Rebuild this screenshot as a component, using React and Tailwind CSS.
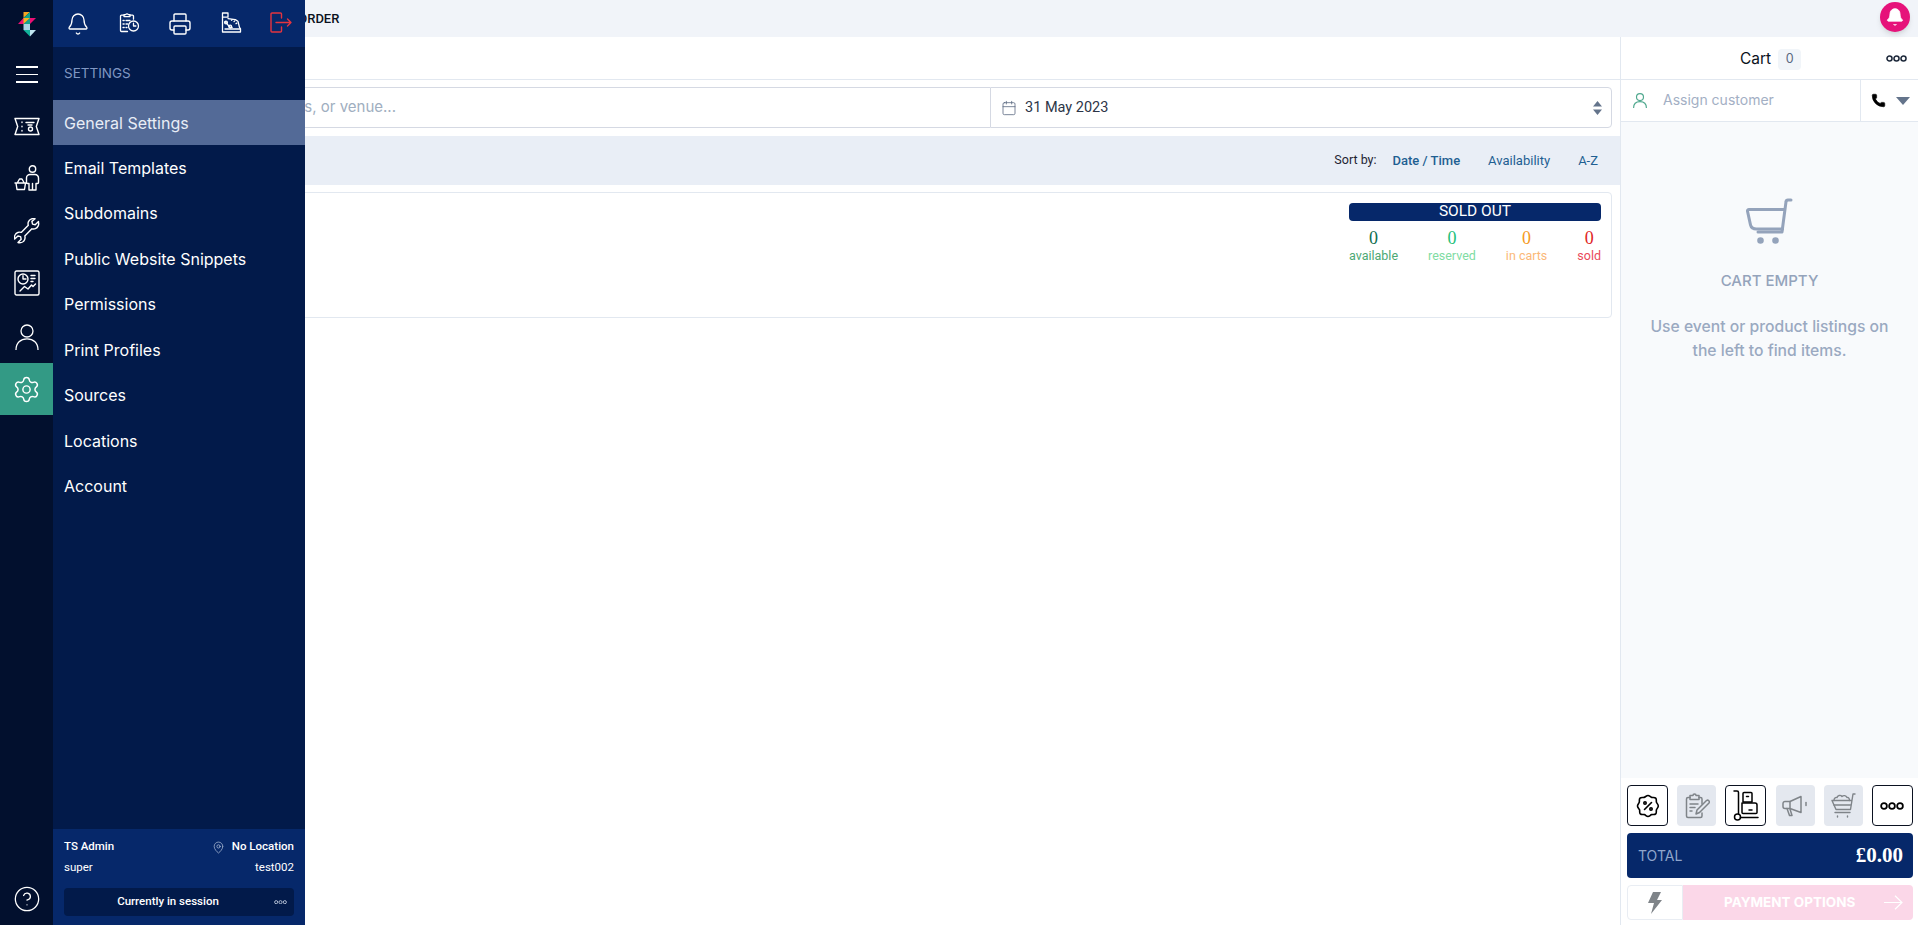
import { Bell, Printer, Settings, CircleHelp, Calendar, Phone, MapPin } from 'lucide-react';

const menu = ['General Settings', 'Email Templates', 'Subdomains', 'Public Website Snippets', 'Permissions', 'Print Profiles', 'Sources', 'Locations', 'Account'];

function Dots({ className = '', size = 20 }) {
  return (
    <svg width={size} height={size / 3} viewBox="0 0 30 10" fill="none" stroke="currentColor" strokeWidth="2.2" className={className}>
      <circle cx="5" cy="5" r="3.6" />
      <circle cx="15" cy="5" r="3.6" />
      <circle cx="25" cy="5" r="3.6" />
    </svg>
  );
}

function Logo() {
  return (
    <svg width="18" height="25" viewBox="0 0 18 25" className="block">
      <polygon points="5.5,0 12,0 5.5,6" fill="#f5a623" />
      <polygon points="12,0 12,6 5.5,6" fill="#12a58c" />
      <polygon points="0,12 5.5,6 18,6 12,12" fill="#ec0f74" />
      <polygon points="5.5,6 12,6 5.5,12" fill="#f5b81f" />
      <polygon points="12,6 12,12 5.5,12" fill="#12a58c" />
      <rect x="5.5" y="12" width="6.5" height="6" fill="#a9d3e6" />
      <polygon points="5.5,18 12,18 12,24.5" fill="#12b39a" />
      <polygon points="12,18 18,18 12,24.5" fill="#bfe6f2" />
    </svg>
  );
}

function ClipboardClock() {
  return (
    <svg width="21" height="21" viewBox="0 0 21 21" fill="none" stroke="currentColor" strokeWidth="1.3" strokeLinejoin="round" strokeLinecap="round">
      <path d="M8.5 19.5H2.5a1 1 0 0 1-1-1V4.2a1 1 0 0 1 1-1h2.3M11.2 3.2h2.3a1 1 0 0 1 1 1v3" />
      <path d="M5 4.6V2.6h1.8a1.3 1.3 0 0 1 2.4 0H11v2z" />
      <path d="M4 8.5h1.2M7 8.5h4M4 12h1.2M7 12h1.6M4 15.5h1.2M7 15.5h1" />
      <circle cx="14.5" cy="14" r="5" />
      <path d="M14.5 11.2V14h2.4" />
    </svg>
  );
}

function CashRegister() {
  return (
    <svg width="21" height="21" viewBox="0 0 21 21" fill="none" stroke="currentColor" strokeWidth="1.3" strokeLinejoin="round" strokeLinecap="round">
      <path d="M1.5 1h5.5v4.2H1.5z" />
      <path d="M1.5 5.2V20h18v-3.2l-1-1.4-1.6-6.2-2.6-1.6L7 6.6" />
      <path d="M4.2 9.5l4.3 5.3 2.6 0.6" />
      <circle cx="5" cy="10.5" r="1.4" />
      <circle cx="9.2" cy="14.6" r="1.4" />
      <path d="M10.5 8.2l.8-.6M13 9.6l.7-.7M15 11.6l.8-.5" />
      <path d="M4 17h15" />
    </svg>
  );
}

function LogoutIcon() {
  return (
    <svg width="22" height="21" viewBox="0 0 22 21" fill="none" stroke="#e5343f" strokeWidth="1.4" strokeLinecap="round" strokeLinejoin="round">
      <path d="M11.5 6V2a1 1 0 0 0-1-1H2a1 1 0 0 0-1 1v17a1 1 0 0 0 1 1h8.500a1 1 0 0 0 1-1v-4" />
      <path d="M6 10.500h15M17.500 7l3.500 3.500-3.500 3.500" />
    </svg>
  );
}

function TicketIcon() {
  return (
    <svg width="26" height="19" viewBox="0 0 26 19" fill="none" stroke="currentColor" strokeWidth="1.4" strokeLinejoin="round" strokeLinecap="round">
      <path d="M1 1.500h24l-2.700 8 2.700 8H1l2.700-8z" />
      <path d="M8 5v.6M8 9.200v.6M8 13.400v.6M12 5.500h8M14 8h4" />
      <circle cx="16.500" cy="12" r="2" />
    </svg>
  );
}

function ShopperIcon() {
  return (
    <svg width="26" height="26" viewBox="0 0 26 26" fill="none" stroke="currentColor" strokeWidth="1.4" strokeLinejoin="round" strokeLinecap="round">
      <circle cx="18.500" cy="4" r="3.200" />
      <path d="M15 25v-6.500h-1.500a1 1 0 0 1-1-1V13a3.500 3.500 0 0 1 3.500-3.500h5a3.500 3.500 0 0 1 3.500 3.500v4.500a1 1 0 0 1-1 1H22V25zM18.500 18.500V25" />
      <path d="M1 18h11.500M2 18l1 6.500h7.500l1-6.500M3.500 17.500l2-3.500h2.500l2 3.500" />
    </svg>
  );
}

function WrenchIcon() {
  return (
    <svg width="26" height="26" viewBox="0 0 26 26" fill="none" stroke="currentColor" strokeWidth="1.4" strokeLinejoin="round" strokeLinecap="round">
      <path d="M24.500 3.500l-3.300 3.200-2.700-.6-.6-2.700L21.100.800c-2.700-.8-5.700.4-6.700 3-.5 1.300-.4 2.500-.1 3.500L7.200 14.400c-1-.3-2.300-.4-3.500.1-2.600 1-3.700 3.900-3 6.600l3.200-3.100 2.700.6.600 2.700-3.200 3.200c2.700.7 5.700-.5 6.700-3.100.5-1.200.4-2.500.1-3.500l7.100-7.100c1 .3 2.300.4 3.500-.1 2.600-1 3.800-4.400 3.100-6.200z" />
    </svg>
  );
}

function ReportIcon() {
  return (
    <svg width="26" height="26" viewBox="0 0 26 26" fill="none" stroke="currentColor" strokeWidth="1.4" strokeLinejoin="round" strokeLinecap="round">
      <rect x="1" y="1" width="24" height="24" rx="1.500" />
      <circle cx="9" cy="9" r="5" />
      <path d="M9 5.800V9h3M17 5.500h4M17 8.500h4M17 11.500h2" />
      <path d="M6 21l4.500-4.500 3.500 2.500 3.500-4 1.500 1.500 2.500-2.500" />
    </svg>
  );
}

function PersonIcon({ className = '', size = 24, stroke = 1.3 }) {
  return (
    <svg width={size} height={size * 1.1} viewBox="0 0 24 26.4" fill="none" stroke="currentColor" strokeWidth={stroke} strokeLinecap="round" className={className}>
      <circle cx="12" cy="7" r="6" />
      <path d="M1 25.800c0-7 4.500-11 11-11s11 4 11 11" />
    </svg>
  );
}

function PercentBadge() {
  return (
    <svg width="24" height="24" viewBox="0 0 24 24" fill="none" stroke="currentColor" strokeWidth="1.600" strokeLinejoin="round" strokeLinecap="round">
      <path d="M12 1.500c1.500 0 2.300 1.500 3.700 1.900 1.400.3 2.900-.4 4 .7s.4 2.600.7 4c.4 1.400 1.900 2.200 1.900 3.900s-1.500 2.500-1.900 3.900c-.3 1.400.4 2.900-.7 4s-2.600.4-4 .7c-1.400.4-2.200 1.900-3.700 1.900s-2.300-1.500-3.700-1.900c-1.400-.3-2.900.4-4-.7s-.4-2.600-.7-4C3 14.500 1.500 13.700 1.500 12S3 9.500 3.300 8.100c.3-1.400-.4-2.900.7-4s2.600-.4 4-.7C9.400 3 10.500 1.500 12 1.500z" />
      <path d="M15.500 8.500l-7 7" />
      <circle cx="9" cy="9" r="1.200" />
      <circle cx="15" cy="15" r="1.200" />
    </svg>
  );
}

function NotesIcon() {
  return (
    <svg width="26" height="26" viewBox="0 0 26 26" fill="none" stroke="#7f8489" strokeWidth="1.500" strokeLinejoin="round" strokeLinecap="round">
      <path d="M18 11V6a1.500 1.500 0 0 0-1.500-1.500H15M6 4.500H4A1.500 1.500 0 0 0 2.500 6v17A1.500 1.500 0 0 0 4 24.500h12.500A1.500 1.500 0 0 0 18 23v-3" />
      <path d="M6 6.500V2.500h3a1.500 1.500 0 0 1 3 0h3v4z" />
      <path d="M6 11h8M6 14.500h5M6 18h2" />
      <path d="M12 21l1-4 9.500-9.500a1.800 1.800 0 0 1 2.500 2.500L15.500 19.500z" />
    </svg>
  );
}

function LuggageIcon() {
  return (
    <svg width="26" height="32" viewBox="0 0 26 32" fill="none" stroke="currentColor" strokeWidth="1.500" strokeLinejoin="round" strokeLinecap="round">
      <path d="M1 1h3a1.500 1.500 0 0 1 1.500 1.500V24" />
      <circle cx="4.500" cy="27" r="3" />
      <path d="M7.500 27.500H25" />
      <path d="M10 3.500a1 1 0 0 1 1-1h7a1 1 0 0 1 1 1V12h-9z" />
      <path d="M9 13h13a2 2 0 0 1 2 2v7.500a1 1 0 0 1-1 1H10a1 1 0 0 1-1-1z" />
      <path d="M13.500 6.500h2M16 20h3" />
    </svg>
  );
}

function MegaphoneIcon() {
  return (
    <svg width="26" height="26" viewBox="0 0 26 26" fill="none" stroke="#7f8489" strokeWidth="1.500" strokeLinejoin="round" strokeLinecap="round">
      <path d="M1 10.500a2 2 0 0 1 2-2h5l11-5v16l-11-4H3a2 2 0 0 1-2-2z" />
      <path d="M8 8.500v7M5 15.500l2.500 7h2.500l-2-6.500" />
      <path d="M24 9.500v3" />
    </svg>
  );
}

function BasketIcon() {
  return (
    <svg width="26" height="26" viewBox="0 0 26 26" fill="none" stroke="#7f8489" strokeWidth="1.400" strokeLinejoin="round" strokeLinecap="round">
      <path d="M25 1h-2l-2.500 15.500H6L2 7.500h19.500" />
      <path d="M4 7.500c0-2 1.500-3.500 3-3 .5-2 3.500-3 5-1 1.500-1.500 4-1 5 1 1.500-.5 2.500 1 2.500 3" />
      <path d="M5 19.500h15M7.500 23v1M17.500 23v1M4 12h16.500" />
    </svg>
  );
}

function CartIcon() {
  return (
    <svg width="47" height="46" viewBox="0 0 47 46" fill="none" stroke="#94a3bb" strokeWidth="3" strokeLinejoin="round" strokeLinecap="round">
      <path d="M45 2h-3a2 2 0 0 0-2 1.800L36 34H12" />
      <path d="M38.500 11.500H3a1.500 1.500 0 0 0-1.500 1.800l3 13.500c.8 3.400 3 4.200 6 4.200h26" />
      <circle cx="14.500" cy="42.500" r="1.800" fill="#94a3bb" />
      <circle cx="29.500" cy="42.500" r="1.800" fill="#94a3bb" />
    </svg>
  );
}

function Sidebar() {
  return (
    <div className="absolute left-0 top-0 z-10 flex h-[925px] w-[305px]">
      <div className="flex w-[53px] flex-col items-center bg-[#02102e] text-white">
        <div className="flex h-[49px] w-full items-start justify-center pt-[12px]">
          <Logo />
        </div>
        <div className="mt-[17px] flex w-[22px] flex-col gap-[6px]">
          <div className="h-[1.5px] bg-white" />
          <div className="h-[1.5px] bg-white" />
          <div className="h-[1.5px] bg-white" />
        </div>
        <div className="mt-[33.500px] flex h-[20px] items-center"><TicketIcon /></div>
        <div className="mt-[29px] flex h-[26px] items-center"><ShopperIcon /></div>
        <div className="mt-[27px] flex h-[26px] items-center"><WrenchIcon /></div>
        <div className="mt-[26px] flex h-[26px] items-center"><ReportIcon /></div>
        <div className="mt-[28px] flex h-[26px] items-center"><PersonIcon /></div>
        <div className="mt-[13px] flex h-[52px] w-full items-center justify-center bg-[#339a85]">
          <Settings size={29} strokeWidth={1.200} />
        </div>
        <div className="mt-auto mb-[12px] flex">
          <CircleHelp size={28} strokeWidth={1.100} />
        </div>
      </div>
      <div className="flex w-[252px] flex-col bg-[#021a4a] text-white">
        <div className="flex h-[47px] items-start justify-between bg-[#06286a] pl-[13px] pr-[13px] pt-[12px]">
          <Bell size={24} strokeWidth={1.300} />
          <ClipboardClock />
          <Printer size={24} strokeWidth={1.400} />
          <CashRegister />
          <LogoutIcon />
        </div>
        <div className="flex h-[53px] items-center px-[11px] font-['Inter',sans-serif] text-[13.500px] text-[#8097c2]">SETTINGS</div>
        <div className="flex flex-col font-['Inter',sans-serif] text-[16px]">
          {menu.map((m, i) => (
            <div key={m} className={i === 0 ? 'flex h-[45px] items-center bg-[#536a97] px-[11px] text-[#e8edf6]' : 'flex h-[45.500px] items-center px-[11px]'}>
              {m}
            </div>
          ))}
        </div>
        <div className="mt-auto flex h-[96px] flex-col bg-[#06286a] px-[11px] pt-[9px] font-['Roboto',sans-serif] text-[11.500px]">
          <div className="flex h-[18px] items-center justify-between font-medium">
            <span>TS Admin</span>
            <span className="flex items-center gap-[7px]">
              <MapPin size={13} strokeWidth={1.200} className="text-[#c5d0e4]" />
              No Location
            </span>
          </div>
          <div className="mt-[3px] flex h-[18px] items-center justify-between">
            <span>super</span>
            <span>test002</span>
          </div>
          <div className="relative mt-[11px] flex h-[28px] items-center justify-center rounded-sm bg-[#021a4a] pr-[22px] font-medium">
            Currently in session
            <Dots size={13} className="absolute right-[7px] top-[12px] text-[#b5c1d6]" />
          </div>
        </div>
      </div>
    </div>
  );
}

function Stat({ n, label, numColor, labelColor }) {
  return (
    <div className="flex flex-col items-center">
      <span className={"font-['Liberation_Serif',serif] text-[18px] leading-[18px] " + numColor}>{n}</span>
      <span className={'text-[12.500px] leading-[18px] ' + labelColor}>{label}</span>
    </div>
  );
}

function MainContent() {
  return (
    <div className="flex flex-1 flex-col font-['Roboto',sans-serif]">
      <div className="h-[43px] border-b border-[#e2e8f0] bg-white" />
      <div className="flex h-[56px] items-start pr-[8px] pt-[7px]">
        <div className="flex h-[41px] flex-1 items-center border-y border-[#d5d9e3] pl-[140px] font-['Inter',sans-serif] text-[15px] text-[#a0aec0]">
          Search events, products, or venue...
        </div>
        <div className="flex h-[41px] w-[622px] items-center rounded-r-sm border border-[#d5d9e3] pl-[10px] pr-[9px] text-[14.500px] text-[#2c3547]">
          <Calendar size={16} strokeWidth={1.200} className="text-[#5a6880]" />
          <span className="ml-[8px]">31 May 2023</span>
          <svg width="9" height="14" viewBox="0 0 9 14" fill="#64748b" className="ml-auto">
            <polygon points="4.500,0 9,5.500 0,5.500" />
            <polygon points="0,8.500 9,8.500 4.500,14" />
          </svg>
        </div>
      </div>
      <div className="flex h-[49px] items-center justify-end bg-[#e9eef6] pr-[22px] text-[13px]">
        <span className="mr-[16px] text-[12.500px] text-[#1d2433]">Sort by:</span>
        <span className="mr-[28px] font-medium text-[#1f5f92]">Date / Time</span>
        <span className="mr-[28px] text-[#1f5f92]">Availability</span>
        <span className="text-[#1f5f92]">A-Z</span>
      </div>
      <div className="mr-[8px] mt-[7px] flex h-[126px] justify-end rounded border border-[#e2e8f0] pr-[10px] pt-[10px]">
        <div className="w-[252px]">
          <div className="flex h-[18px] items-center justify-center rounded-sm bg-[#06286a] text-[15.500px] text-white">SOLD OUT</div>
          <div className="mt-[8px] flex justify-between">
            <Stat n="0" label="available" numColor="text-[#0f6e4f]" labelColor="text-[#4ca874]" />
            <Stat n="0" label="reserved" numColor="text-[#22c07a]" labelColor="text-[#7fdca3]" />
            <Stat n="0" label="in carts" numColor="text-[#f59a23]" labelColor="text-[#fbb878]" />
            <Stat n="0" label="sold" numColor="text-[#e02424]" labelColor="text-[#ea4a5a]" />
          </div>
        </div>
      </div>
    </div>
  );
}

function CartPanel() {
  const enabled = 'flex h-[41px] w-[41px] items-center justify-center rounded-[4px] border border-[#0b1221] text-black';
  const disabled = 'flex h-[41px] w-[39px] items-center justify-center rounded-[4px] bg-[#e4e8ef]';
  return (
    <div className="flex w-[298px] flex-col border-l border-[#e2e8f0] font-['Inter',sans-serif]">
      <div className="relative flex h-[43px] items-center justify-center border-b border-[#e2e8f0] pl-[2px] pt-[2px]">
        <span className="text-[15.500px] text-[#0b1221]">Cart</span>
        <span className="ml-[7px] flex h-[21px] w-[23px] items-center justify-center rounded bg-[#f1f5f9] text-[12.500px] text-[#5a6880]">0</span>
        <Dots size={21} className="absolute right-[11px] top-[18px] text-[#1e293b]" />
      </div>
      <div className="flex h-[42px] items-center border-b border-[#e2e8f0]">
        <PersonIcon size={14} stroke={2} className="ml-[12px] text-[#4fa88e]" />
        <span className="ml-[16px] flex-1 pb-[2px] text-[14px] text-[#a3afc4]">Assign customer</span>
        <div className="flex h-full w-[58px] items-center border-l border-[#e2e8f0] pl-[10px]">
          <Phone size={15} fill="#000" strokeWidth={1} className="text-black" />
          <svg width="14" height="8" viewBox="0 0 14 8" fill="#64748b" className="ml-[10px]">
            <polygon points="0,0 14,0 7,8" />
          </svg>
        </div>
      </div>
      <div className="flex flex-1 flex-col items-center bg-[#f8fafc] pt-[76px] text-center">
        <CartIcon />
        <div className="mt-[27px] text-[15px] font-medium leading-[20px] text-[#94a3bb]">CART EMPTY</div>
        <div className="mt-[24px] w-[250px] text-[15.700px] font-medium leading-[24px] text-[#9aa9c1]">
          Use event or product listings on the left to find items.
        </div>
      </div>
      <div className="flex h-[147px] flex-col pl-[6px] pr-[5px] pt-[7px]">
        <div className="flex justify-between">
          <div className={enabled}><PercentBadge /></div>
          <div className={disabled}><NotesIcon /></div>
          <div className={enabled}><LuggageIcon /></div>
          <div className={disabled}><MegaphoneIcon /></div>
          <div className={disabled}><BasketIcon /></div>
          <div className={enabled}><Dots size={24} /></div>
        </div>
        <div className="mt-[7px] flex h-[45px] items-center justify-between rounded-sm bg-[#06286a] pl-[11px] pr-[10px]">
          <span className="text-[14px] text-[#8fa5cc]">TOTAL</span>
          <span className="font-['Liberation_Serif',serif] text-[21px] font-bold text-white">£0.00</span>
        </div>
        <div className="mt-[7px] flex h-[35px]">
          <div className="flex w-[56px] items-center justify-center rounded-l-sm border border-[#e9edf3]">
            <svg width="14" height="22" viewBox="0 0 14 22" fill="#7f8489">
              <polygon points="5,0 13,0 9,8 14,8 3,22 6,11 0,11" />
            </svg>
          </div>
          <div className="relative flex flex-1 items-center rounded-r-sm bg-[#fbd7e8] pl-[41px] text-[13.500px] font-bold text-white">
            PAYMENT OPTIONS
            <svg width="19" height="15" viewBox="0 0 19 15" fill="none" stroke="#fff" strokeWidth="1.200" className="absolute right-[10px] top-[10px]">
              <path d="M0 7.500h18M11 .800l7 6.700-7 6.700" />
            </svg>
          </div>
        </div>
      </div>
    </div>
  );
}

export default function App() {
  return (
    <div className="relative flex h-[925px] w-[1918px] flex-col overflow-hidden bg-white">
      <Sidebar />
      <div className="relative flex h-[37px] items-center justify-end bg-[#f1f4f9]">
        <span className="absolute left-[267px] font-['Roboto',sans-serif] text-[13px] font-medium text-[#0b1221]">NEW ORDER</span>
        <div className="mr-[8px] mt-[-3px] flex h-[30px] w-[30px] items-center justify-center rounded-full bg-[#e6127a] shadow-md">
          <Bell size={20} fill="#fff" strokeWidth={1} className="text-white" />
        </div>
      </div>
      <div className="flex flex-1">
        <MainContent />
        <CartPanel />
      </div>
    </div>
  );
}
